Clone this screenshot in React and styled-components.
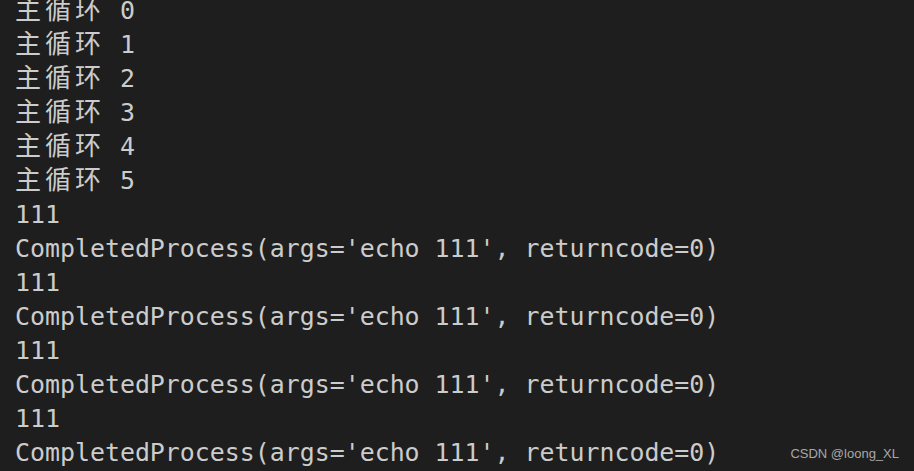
import React from "react";
import styled, { createGlobalStyle } from "styled-components";

const Global = createGlobalStyle`
  html, body {
    margin: 0;
    padding: 0;
    background: #1e1e1e;
    overflow: hidden;
  }
`;

const Terminal = styled.div`
  position: relative;
  width: 914px;
  height: 471px;
  background: #1e1e1e;
  overflow: hidden;
`;

const Output = styled.div`
  display: flex;
  flex-direction: column;
  margin-top: -6px;
  padding-left: 15px;
  font-family: "DejaVu Sans Mono", "Liberation Mono", monospace;
  font-size: 24.9px;
  color: #cccccc;
`;

const Line = styled.div`
  height: 34px;
  line-height: 34px;
  white-space: pre;
`;

const Wide = styled.span`
  font-family: "Noto Sans CJK SC", sans-serif;
  font-size: 26px;
  line-height: 0;
  letter-spacing: 4px;
`;

const Watermark = styled.div`
  position: absolute;
  right: 15px;
  bottom: 10px;
  font-family: "Liberation Sans", Arial, sans-serif;
  font-size: 13px;
  color: #a8a8a8;
`;

const lines = [
  ...[0, 1, 2, 3, 4, 5].map((n) => ({ cjk: "主循环", text: ` ${n}` })),
  ...Array.from({ length: 4 }).flatMap(() => [
    { text: "111" },
    { text: "CompletedProcess(args='echo 111', returncode=0)" },
  ]),
];

const App = () => (
  <Terminal>
    <Global />
    <Output>
      {lines.map((l, i) => (
        <Line key={i}>
          {l.cjk && <Wide>{l.cjk}</Wide>}
          {l.text}
        </Line>
      ))}
    </Output>
    <Watermark>CSDN @loong_XL</Watermark>
  </Terminal>
);

export default App;
